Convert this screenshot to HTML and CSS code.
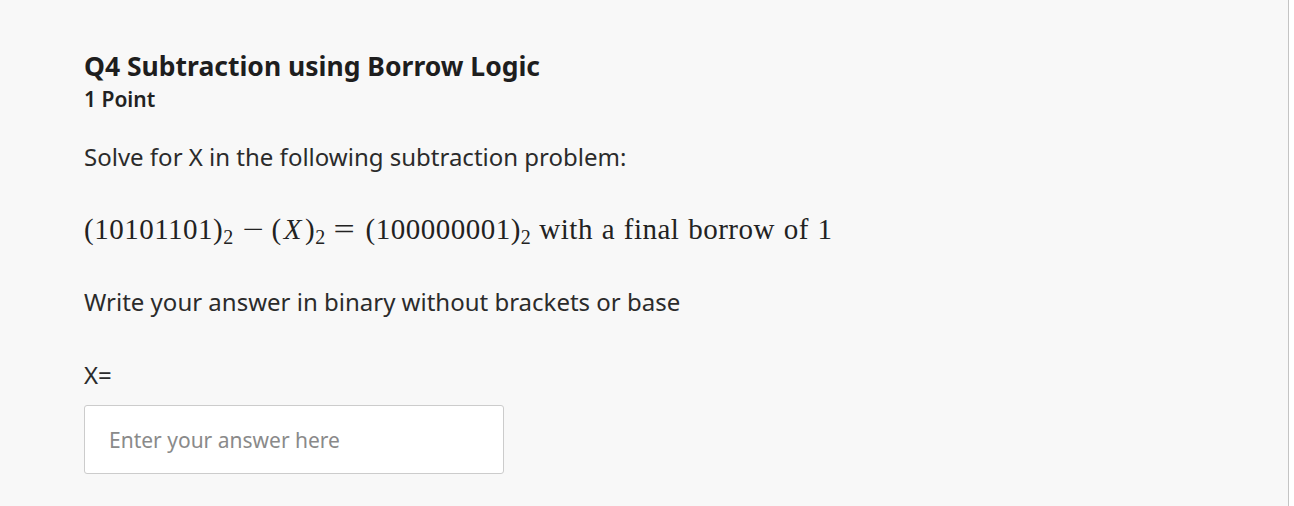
FILE: index.html
```html
<!DOCTYPE html>
<html lang="en">
<head>
<meta charset="utf-8">
<title>Q4 Subtraction using Borrow Logic</title>
<link rel="stylesheet" href="styles.css">
</head>
<body>
<div class="page">
  <div class="question">
    <h2 class="q-title">Q4 Subtraction using Borrow Logic</h2>
    <div class="q-points">1 Point</div>
    <p class="q-text intro">Solve for X in the following subtraction problem:</p>
    <p class="math">(10101101)<sub>2</sub><span class="op minus">−</span>(<i>X</i>)<sub>2</sub><span class="op eq">=</span>(100000001)<sub>2</sub><span class="words">with a final borrow of 1</span></p>
    <p class="q-text instr">Write your answer in binary without brackets or base</p>
    <p class="q-text label">X=</p>
    <input class="answer" type="text" placeholder="Enter your answer here">
  </div>
</div>
</body>
</html>
```

FILE: styles.css
```css
html, body {
  margin: 0;
  padding: 0;
  background: #ffffff;
}
.page {
  width: 1288px;
  height: 506px;
  background: #f8f8f8;
  border-right: 1px solid #c4c4c4;
  font-family: "Noto Sans", sans-serif;
  color: #2b2b2b;
  overflow: hidden;
}
.question {
  padding: 48px 0 0 84px;
}
.q-title {
  margin: 0;
  font-size: 26.5px;
  font-weight: 700;
  line-height: 36px;
  color: #1e1e1e;
}
.q-points {
  margin-top: 1px;
  font-size: 21px;
  font-weight: 600;
  line-height: 28px;
  color: #222;
}
.q-text {
  margin: 0;
  font-size: 24px;
  line-height: 32px;
}
.intro {
  margin-top: 28px;
}
.math {
  margin: 38px 0 0;
  font-family: "Liberation Serif", serif;
  font-size: 29px;
  letter-spacing: 0.5px;
  line-height: 36px;
  color: #222;
  white-space: nowrap;
}
.math sub {
  font-size: 20px;
  vertical-align: -5px;
  line-height: 0;
}
.math i {
  font-style: italic;
  padding: 0 3px 0 2px;
}
.math .op {
  display: inline-block;
  transform: scaleX(1.3);
}
.math .minus {
  margin: 0 10px 0 11px;
}
.math .eq {
  margin: 0 13px 0 10px;
}
.math .words {
  margin-left: 8px;
  word-spacing: 1px;
}
.instr {
  margin-top: 39px;
}
.label {
  margin-top: 41px;
}
.answer {
  display: block;
  box-sizing: border-box;
  margin-top: 14px;
  width: 420px;
  height: 69px;
  border: 1px solid #cccccc;
  border-radius: 3px;
  background: #fff;
  padding: 0 24px;
  font-family: "Noto Sans", sans-serif;
  font-size: 21px;
  color: #222;
  outline: none;
}
.answer::placeholder {
  color: #8a8a8a;
}
```
